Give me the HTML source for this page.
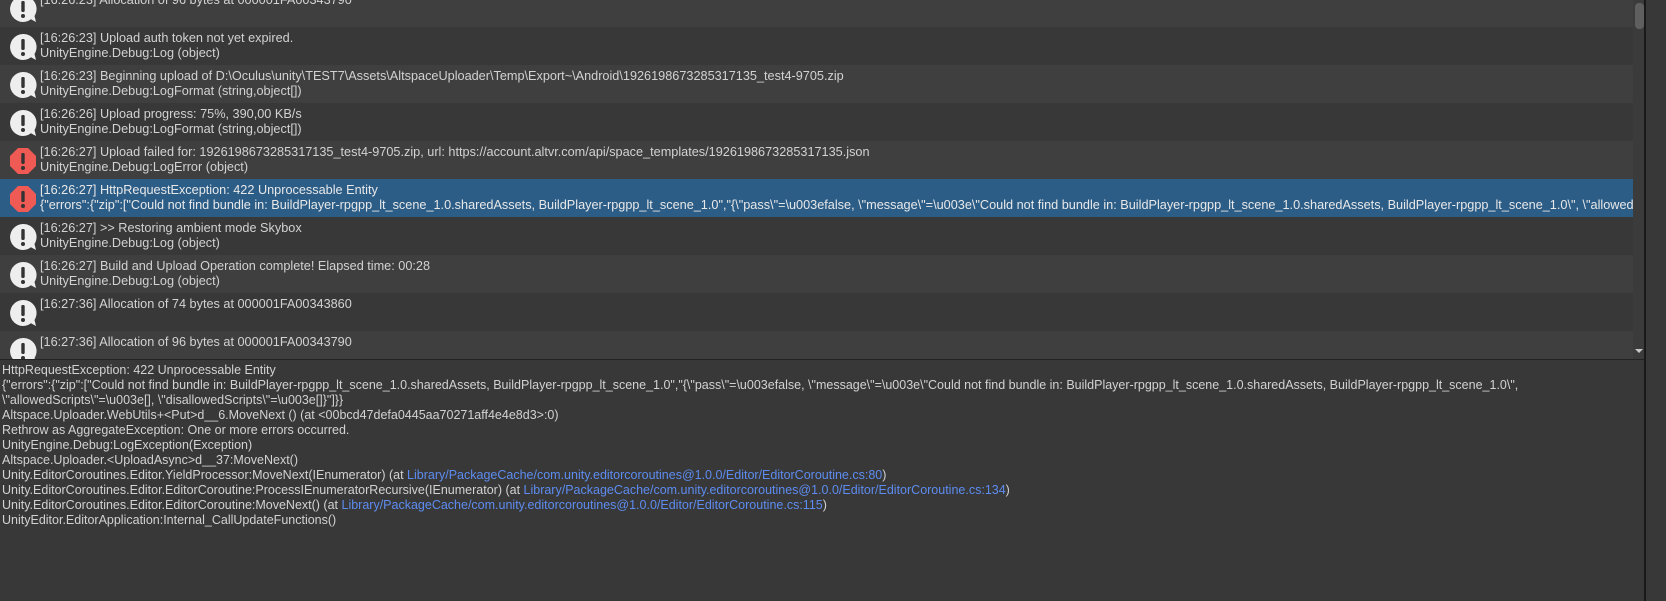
<!DOCTYPE html>
<html><head><meta charset="utf-8"><style>
*{margin:0;padding:0;box-sizing:border-box}
body{width:1666px;height:601px;background:#383838;overflow:hidden;font-family:"Liberation Sans",sans-serif;font-size:12.5px;color:#d2d2d2;position:relative}
.list{position:absolute;left:0;top:0;width:1633px;height:359px;overflow:hidden;font-size:12.7px}
.row{position:absolute;left:0;width:1633px;height:38px;white-space:nowrap;overflow:hidden}
.row.a{background:#3f3f3f}.row.b{background:#383838}.row.sel{background:#2c5d87;color:#e8e8e8}
.row .t{position:absolute;left:40px;top:4px;line-height:15px}
.row svg{position:absolute;left:9px;top:6px}
.sb{position:absolute;left:1633px;top:0;width:12px;height:359px;background:#3b3b3b}
.thumb{position:absolute;left:1635px;top:3px;width:9px;height:26px;background:#5f5f5f;border-radius:4px}
.div{position:absolute;left:1644px;top:0;width:2px;height:601px;background:#191919}
.hl{position:absolute;left:0;top:359px;width:1644px;height:1px;background:#232323}
.bottom{position:absolute;left:2px;top:363px;line-height:15px;white-space:pre}
a{color:#5d8cf0;text-decoration:none}
</style></head><body>
<div class="list">
<div class="row a" style="top:-11px"><svg width="28" height="28" viewBox="0 0 28 28"><path d="M14 1A13 13 0 1 0 22 24.3L27 27 25.5 21A13 13 0 0 0 14 1Z" fill="#eee"/><rect x="12.3" y="6" width="3.4" height="11" rx="1.2" fill="#333"/><circle cx="14" cy="21" r="2" fill="#333"/></svg><div class="t">[16:26:23] Allocation of 96 bytes at 000001FA00343790</div></div>
<div class="row b" style="top:27px"><svg width="28" height="28" viewBox="0 0 28 28"><path d="M14 1A13 13 0 1 0 22 24.3L27 27 25.5 21A13 13 0 0 0 14 1Z" fill="#eee"/><rect x="12.3" y="6" width="3.4" height="11" rx="1.2" fill="#333"/><circle cx="14" cy="21" r="2" fill="#333"/></svg><div class="t">[16:26:23] Upload auth token not yet expired.<br>UnityEngine.Debug:Log (object)</div></div>
<div class="row a" style="top:65px"><svg width="28" height="28" viewBox="0 0 28 28"><path d="M14 1A13 13 0 1 0 22 24.3L27 27 25.5 21A13 13 0 0 0 14 1Z" fill="#eee"/><rect x="12.3" y="6" width="3.4" height="11" rx="1.2" fill="#333"/><circle cx="14" cy="21" r="2" fill="#333"/></svg><div class="t">[16:26:23] Beginning upload of D:\Oculus\unity\TEST7\Assets\AltspaceUploader\Temp\Export~\Android\1926198673285317135_test4-9705.zip<br>UnityEngine.Debug:LogFormat (string,object[])</div></div>
<div class="row b" style="top:103px"><svg width="28" height="28" viewBox="0 0 28 28"><path d="M14 1A13 13 0 1 0 22 24.3L27 27 25.5 21A13 13 0 0 0 14 1Z" fill="#eee"/><rect x="12.3" y="6" width="3.4" height="11" rx="1.2" fill="#333"/><circle cx="14" cy="21" r="2" fill="#333"/></svg><div class="t">[16:26:26] Upload progress: 75%, 390,00 KB/s<br>UnityEngine.Debug:LogFormat (string,object[])</div></div>
<div class="row a" style="top:141px"><svg width="28" height="28" viewBox="0 0 28 28"><path d="M9 1H19L27 9V19L19 27H9L1 19V9Z" fill="#f05a55"/><rect x="12.3" y="6" width="3.4" height="11" rx="1.2" fill="#333"/><circle cx="14" cy="21" r="2" fill="#333"/></svg><div class="t">[16:26:27] Upload failed for: 1926198673285317135_test4-9705.zip, url: https://account.altvr.com/api/space_templates/1926198673285317135.json<br>UnityEngine.Debug:LogError (object)</div></div>
<div class="row sel" style="top:179px"><svg width="28" height="28" viewBox="0 0 28 28"><path d="M9 1H19L27 9V19L19 27H9L1 19V9Z" fill="#f05a55"/><rect x="12.3" y="6" width="3.4" height="11" rx="1.2" fill="#333"/><circle cx="14" cy="21" r="2" fill="#333"/></svg><div class="t">[16:26:27] HttpRequestException: 422 Unprocessable Entity<br>{"errors":{"zip":["Could not find bundle in: BuildPlayer-rpgpp_lt_scene_1.0.sharedAssets, BuildPlayer-rpgpp_lt_scene_1.0","{\"pass\"=\u003efalse, \"message\"=\u003e\"Could not find bundle in: BuildPlayer-rpgpp_lt_scene_1.0.sharedAssets, BuildPlayer-rpgpp_lt_scene_1.0\", \"allowedScripts\"=\u003e[]</div></div>
<div class="row b" style="top:217px"><svg width="28" height="28" viewBox="0 0 28 28"><path d="M14 1A13 13 0 1 0 22 24.3L27 27 25.5 21A13 13 0 0 0 14 1Z" fill="#eee"/><rect x="12.3" y="6" width="3.4" height="11" rx="1.2" fill="#333"/><circle cx="14" cy="21" r="2" fill="#333"/></svg><div class="t">[16:26:27] &gt;&gt; Restoring ambient mode Skybox<br>UnityEngine.Debug:Log (object)</div></div>
<div class="row a" style="top:255px"><svg width="28" height="28" viewBox="0 0 28 28"><path d="M14 1A13 13 0 1 0 22 24.3L27 27 25.5 21A13 13 0 0 0 14 1Z" fill="#eee"/><rect x="12.3" y="6" width="3.4" height="11" rx="1.2" fill="#333"/><circle cx="14" cy="21" r="2" fill="#333"/></svg><div class="t">[16:26:27] Build and Upload Operation complete! Elapsed time: 00:28<br>UnityEngine.Debug:Log (object)</div></div>
<div class="row b" style="top:293px"><svg width="28" height="28" viewBox="0 0 28 28"><path d="M14 1A13 13 0 1 0 22 24.3L27 27 25.5 21A13 13 0 0 0 14 1Z" fill="#eee"/><rect x="12.3" y="6" width="3.4" height="11" rx="1.2" fill="#333"/><circle cx="14" cy="21" r="2" fill="#333"/></svg><div class="t">[16:27:36] Allocation of 74 bytes at 000001FA00343860</div></div>
<div class="row a" style="top:331px"><svg width="28" height="28" viewBox="0 0 28 28"><path d="M14 1A13 13 0 1 0 22 24.3L27 27 25.5 21A13 13 0 0 0 14 1Z" fill="#eee"/><rect x="12.3" y="6" width="3.4" height="11" rx="1.2" fill="#333"/><circle cx="14" cy="21" r="2" fill="#333"/></svg><div class="t">[16:27:36] Allocation of 96 bytes at 000001FA00343790</div></div>
</div>
<div class="sb"></div><div class="thumb"></div>
<svg style="position:absolute;left:1634px;top:348px" width="10" height="6"><path d="M1 1H9L5 5Z" fill="#c8c8c8"/></svg>
<div class="hl"></div>
<div class="div"></div>
<div class="bottom">HttpRequestException: 422 Unprocessable Entity
{"errors":{"zip":["Could not find bundle in: BuildPlayer-rpgpp_lt_scene_1.0.sharedAssets, BuildPlayer-rpgpp_lt_scene_1.0","{\"pass\"=\u003efalse, \"message\"=\u003e\"Could not find bundle in: BuildPlayer-rpgpp_lt_scene_1.0.sharedAssets, BuildPlayer-rpgpp_lt_scene_1.0\",
\"allowedScripts\"=\u003e[], \"disallowedScripts\"=\u003e[]}"]}}
Altspace.Uploader.WebUtils+&lt;Put&gt;d__6.MoveNext () (at &lt;00bcd47defa0445aa70271aff4e4e8d3&gt;:0)
Rethrow as AggregateException: One or more errors occurred.
UnityEngine.Debug:LogException(Exception)
Altspace.Uploader.&lt;UploadAsync&gt;d__37:MoveNext()
Unity.EditorCoroutines.Editor.YieldProcessor:MoveNext(IEnumerator) (at <a>Library/PackageCache/com.unity.editorcoroutines@1.0.0/Editor/EditorCoroutine.cs:80</a>)
Unity.EditorCoroutines.Editor.EditorCoroutine:ProcessIEnumeratorRecursive(IEnumerator) (at <a>Library/PackageCache/com.unity.editorcoroutines@1.0.0/Editor/EditorCoroutine.cs:134</a>)
Unity.EditorCoroutines.Editor.EditorCoroutine:MoveNext() (at <a>Library/PackageCache/com.unity.editorcoroutines@1.0.0/Editor/EditorCoroutine.cs:115</a>)
UnityEditor.EditorApplication:Internal_CallUpdateFunctions()</div>
</body></html>
